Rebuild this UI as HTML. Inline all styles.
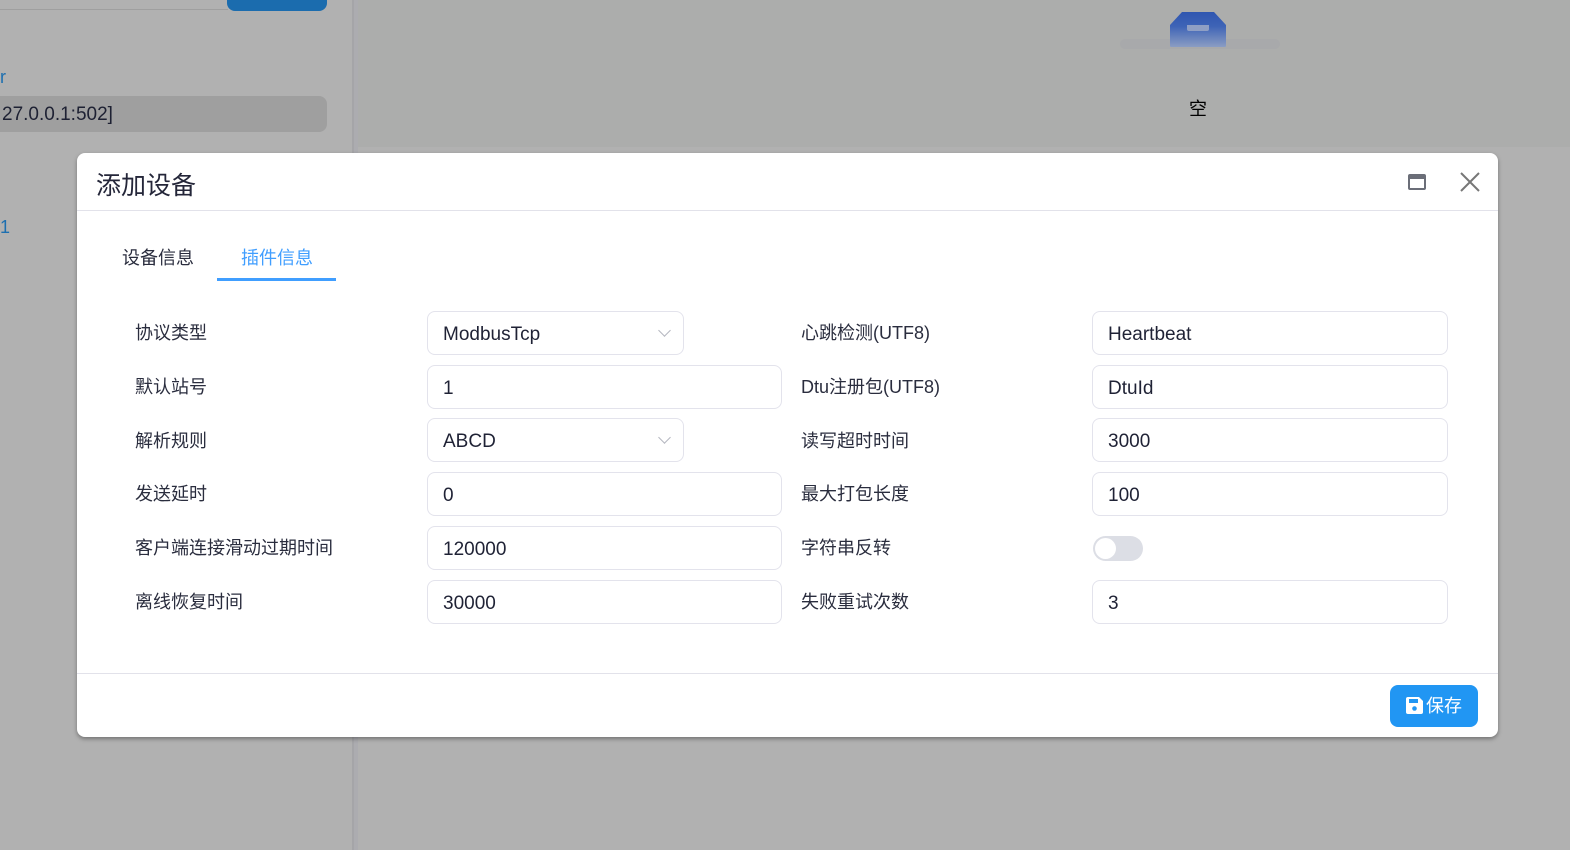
<!DOCTYPE html>
<html><head><meta charset="utf-8"><style>
*{box-sizing:border-box;margin:0;padding:0}
body{width:1570px;height:850px;overflow:hidden;position:relative;background:#b1b1b1;font-family:"Liberation Sans","Noto Sans CJK SC",sans-serif;color:#222538}
.abs{position:absolute}
.inp{position:absolute;height:44px;border:1px solid #e3e3ec;border-radius:8px;background:#fff;font-size:19px;line-height:45px;padding-left:15px;color:#1f2235}
.lbl{position:absolute;font-size:18px;color:#2a2d3e;line-height:24px}
.chev{position:absolute;right:14px;top:14px;width:9px;height:9px;border-right:1.5px solid #b5b7c0;border-bottom:1.5px solid #b5b7c0;transform:rotate(45deg)}
</style></head><body>
<div class="abs" style="left:0;top:0;width:352px;height:850px;background:#b1b1b1"></div>
<div class="abs" style="left:0;top:9px;width:228px;height:1px;background:#9f9f9f"></div>
<div class="abs" style="left:227px;top:0;width:100px;height:11px;background:#1b6cae;border-radius:0 0 8px 8px"></div>
<div class="abs" style="left:0;top:67px;font-size:18px;color:#1d6fb0">r</div>
<div class="abs" style="left:-10px;top:96px;width:337px;height:36px;background:#9f9f9f;border-radius:8px"></div>
<div class="abs" style="left:2px;top:104px;font-size:19px;color:#1e2133">27.0.0.1:502]</div>
<div class="abs" style="left:0;top:217px;font-size:18px;color:#1d6fb0">1</div>
<div class="abs" style="left:352px;top:0;width:2px;height:850px;background:#a5a5a8"></div>
<div class="abs" style="left:354px;top:0;width:4px;height:850px;background:#acacb0"></div>
<div class="abs" style="left:358px;top:0;width:1212px;height:147px;background:#acadac"></div>
<div class="abs" style="left:358px;top:147px;width:1212px;height:703px;background:#b1b1b1"></div>
<div class="abs" style="left:1120px;top:39px;width:160px;height:10px;background:#a8a9ab;border-radius:5px"></div>
<svg class="abs" style="left:1170px;top:11px" width="56" height="37" viewBox="0 0 56 37"><path d="M12 1H44L56 14V35Q56 36 54 36H2Q0 36 0 35V14Z" fill="url(#g)"/><path d="M17 14H39V18Q39 20 37 20H19Q17 20 17 18Z" fill="#8f9fc4"/><defs><linearGradient id="g" x1="0" y1="0" x2="0" y2="1"><stop offset="0" stop-color="#2f56b0"/><stop offset="0.4" stop-color="#3d63b6"/><stop offset="1" stop-color="#8b9dc3"/></linearGradient></defs></svg>
<div class="abs" style="left:1189px;top:95px;font-size:18px;color:#000">空</div>
<div class="abs" style="left:77px;top:153px;width:1421px;height:584px;background:#fff;border-radius:8px;box-shadow:0 2px 4px rgba(0,0,0,.35)"></div>
<div class="abs" style="left:96px;top:166px;font-size:25px;color:#242639">添加设备</div>
<div class="abs" style="left:1408px;top:174px;width:18px;height:16px;border:2px solid #6b6e78;border-top-width:5px;border-radius:2px"></div>
<svg class="abs" style="left:1460px;top:172px" width="20" height="20"><path d="M1 1L19 19M19 1L1 19" stroke="#777" stroke-width="2"/></svg>
<div class="abs" style="left:77px;top:210px;width:1421px;height:1px;background:#e2e2ea"></div>
<div class="abs" style="left:122px;top:244px;font-size:18px;color:#2a2d3e">设备信息</div>
<div class="abs" style="left:241px;top:244px;font-size:18px;color:#409eff">插件信息</div>
<div class="abs" style="left:217px;top:278px;width:119px;height:3px;background:#409eff"></div>

<div class="lbl" style="left:135px;top:321px">协议类型</div>
<div class="inp" style="left:427px;top:311px;width:257px">ModbusTcp<span class="chev"></span></div>
<div class="lbl" style="left:801px;top:321px">心跳检测(UTF8)</div>
<div class="inp" style="left:1092px;top:311px;width:356px">Heartbeat</div>

<div class="lbl" style="left:135px;top:375px">默认站号</div>
<div class="inp" style="left:427px;top:365px;width:355px">1</div>
<div class="lbl" style="left:801px;top:375px">Dtu注册包(UTF8)</div>
<div class="inp" style="left:1092px;top:365px;width:356px">DtuId</div>

<div class="lbl" style="left:135px;top:429px">解析规则</div>
<div class="inp" style="left:427px;top:418px;width:257px">ABCD<span class="chev"></span></div>
<div class="lbl" style="left:801px;top:429px">读写超时时间</div>
<div class="inp" style="left:1092px;top:418px;width:356px">3000</div>

<div class="lbl" style="left:135px;top:482px">发送延时</div>
<div class="inp" style="left:427px;top:472px;width:355px">0</div>
<div class="lbl" style="left:801px;top:482px">最大打包长度</div>
<div class="inp" style="left:1092px;top:472px;width:356px">100</div>

<div class="lbl" style="left:135px;top:536px">客户端连接滑动过期时间</div>
<div class="inp" style="left:427px;top:526px;width:355px">120000</div>
<div class="lbl" style="left:801px;top:536px">字符串反转</div>
<div class="abs" style="left:1093px;top:536px;width:50px;height:25px;border-radius:13px;background:#dcdee5"></div>
<div class="abs" style="left:1095px;top:538px;width:21px;height:21px;border-radius:50%;background:#fff"></div>

<div class="lbl" style="left:135px;top:590px">离线恢复时间</div>
<div class="inp" style="left:427px;top:580px;width:355px">30000</div>
<div class="lbl" style="left:801px;top:590px">失败重试次数</div>
<div class="inp" style="left:1092px;top:580px;width:356px">3</div>

<div class="abs" style="left:77px;top:673px;width:1421px;height:1px;background:#e2e2ea"></div>
<div class="abs" style="left:1390px;top:685px;width:88px;height:42px;background:#2196f3;border-radius:8px;color:#fff;font-size:18px;line-height:42px;padding-left:36px">保存</div>
<svg class="abs" style="left:1406px;top:697px" width="17" height="17" viewBox="0 0 17 17"><path d="M2 0H13L17 4V15Q17 17 15 17H2Q0 17 0 15V2Q0 0 2 0Z" fill="#fff"/><rect x="3" y="2" width="9" height="4" fill="#2196f3"/><circle cx="8.5" cy="11.5" r="2.3" fill="#2196f3"/></svg>
</body></html>
